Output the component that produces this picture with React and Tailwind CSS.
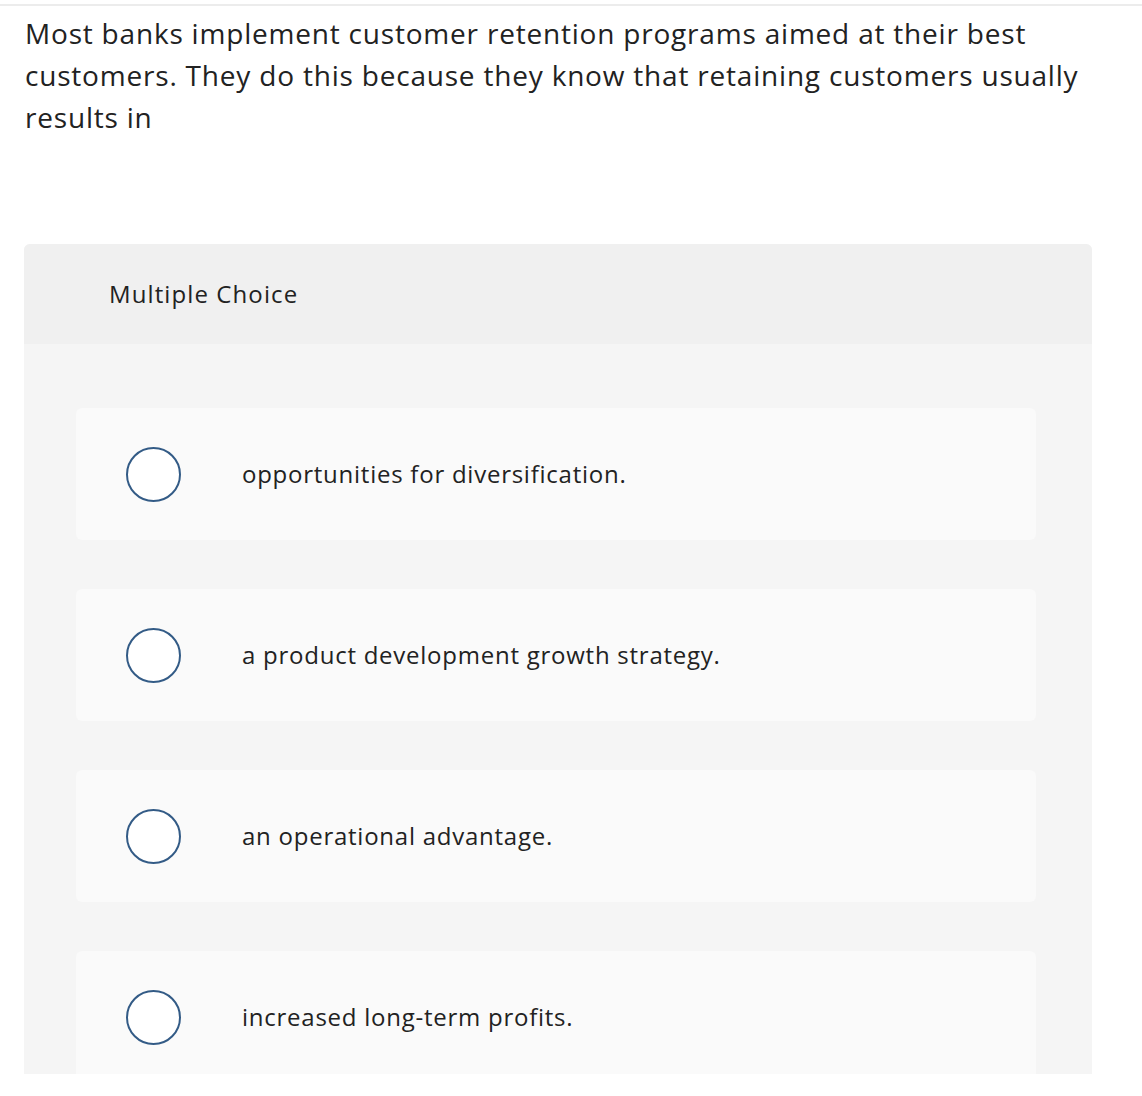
import React from 'react';

const options = [
  'opportunities for diversification.',
  'a product development growth strategy.',
  'an operational advantage.',
  'increased long-term profits.',
];

const App = () => {
  return (
    <div className="min-h-[1096px] bg-white font-['Open_Sans',sans-serif] text-[#222222]">
      <div className="h-[4px]" />
      <div className="h-[2px] bg-[#ececec]" />

      {/* Question */}
      <div className="pl-[25px] pr-[40px] pt-[6px]">
        <p className="text-[28px] leading-[42px] tracking-[0.8px]">
          Most banks implement customer retention programs aimed at their best customers. They do this
          because they know that retaining customers usually results in
        </p>
      </div>

      {/* Answer panel */}
      <div className="mt-[106px] ml-[24px] w-[1068px] h-[830px] overflow-hidden rounded-t-[6px] bg-[#f5f5f5]">
        <div className="h-[100px] bg-[#f0f0f0] flex items-center pl-[85px]">
          <span className="text-[24px] tracking-[1.1px]">Multiple Choice</span>
        </div>

        <div className="pl-[52px] pr-[56px] pt-[64px] flex flex-col gap-[49px]">
          {options.map((opt, i) => (
            <div
              key={i}
              className="h-[132px] shrink-0 rounded-[6px] bg-[#fafafa] flex items-center pl-[50px]"
            >
              <div className="w-[55px] h-[55px] rounded-full border-2 border-[#335b86] bg-white shrink-0" />
              <span className="ml-[61px] text-[24px] tracking-[0.75px]">{opt}</span>
            </div>
          ))}
        </div>
      </div>
    </div>
  );
};

export default App;
